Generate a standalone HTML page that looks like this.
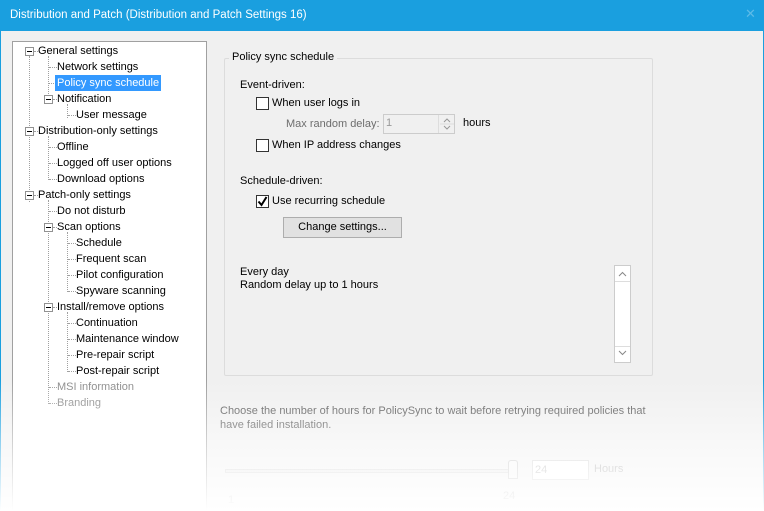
<!DOCTYPE html>
<html><head><style>
*{margin:0;padding:0;box-sizing:border-box}
body{width:764px;height:511px;overflow:hidden;background:#f0f0f0;font-family:"Liberation Sans",sans-serif;font-size:11px;color:#000;position:relative}
.a{position:absolute;white-space:nowrap}
#title{left:0;top:0;width:764px;height:31px;background:#1a9fdf;color:#fff;font-size:11.5px;padding:9px 0 0 10px}
#lb{left:0;top:31px;width:1px;height:480px;background:#1a9fdf}
#rb{left:763px;top:31px;width:1px;height:480px;background:#1a9fdf}
#tree{left:12px;top:41px;width:195px;height:470px;background:#fff;border:1px solid #a0a0a0}
.t{position:absolute;height:16px;line-height:16px}
.box{position:absolute;width:9px;height:9px;border:1px solid #919191;background:#fff}
.box:after{content:"";position:absolute;left:1px;top:3px;width:5px;height:1px;background:#000}
.dv{position:absolute;border-left:1px dotted #a0a0a0;width:0}
.dh{position:absolute;border-top:1px dotted #a0a0a0;height:0}
.sel{background:#3399ff;color:#fff;padding:0 2px}
.grey{color:#8c8c8c}
#grp{left:224px;top:58px;width:429px;height:318px;border:1px solid #dcdcdc;border-radius:2px}
.cb{position:absolute;width:13px;height:13px;border:1px solid #333;background:#fff}
.btn{left:283px;top:217px;width:119px;height:21px;border:1px solid #adadad;background:#e1e1e1;text-align:center;line-height:19px}
#fade{left:0;top:380px;width:764px;height:131px;background:linear-gradient(rgba(255,255,255,0),rgba(255,255,255,0.6) 55%,rgba(255,255,255,1))}
svg{position:absolute}
</style></head><body>
<div id="title" class="a">Distribution and Patch (Distribution and Patch Settings 16)</div>
<div class="a" style="left:745px;top:6px;color:#5dbbe8;font-size:13px">✕</div>
<div id="lb" class="a"></div><div id="rb" class="a"></div>

<div id="tree" class="a">
<div class="dv" style="left:16px;top:14px;height:146px"></div>
<div class="dv" style="left:35px;top:14px;height:48px"></div>
<div class="dv" style="left:54px;top:62px;height:14px"></div>
<div class="dv" style="left:35px;top:94px;height:44px"></div>
<div class="dv" style="left:35px;top:158px;height:204px"></div>
<div class="dv" style="left:54px;top:190px;height:60px"></div>
<div class="dv" style="left:54px;top:270px;height:60px"></div>
<div class="box" style="left:12px;top:5px"></div>
<div class="box" style="left:31px;top:53px"></div>
<div class="box" style="left:12px;top:85px"></div>
<div class="box" style="left:12px;top:149px"></div>
<div class="box" style="left:31px;top:181px"></div>
<div class="box" style="left:31px;top:261px"></div>
<div class="dh" style="left:21px;top:9px;width:4px"></div>
<div class="dh" style="left:36px;top:25px;width:8px"></div>
<div class="dh" style="left:36px;top:41px;width:7px"></div>
<div class="dh" style="left:40px;top:57px;width:4px"></div>
<div class="dh" style="left:55px;top:73px;width:8px"></div>
<div class="dh" style="left:21px;top:89px;width:4px"></div>
<div class="dh" style="left:36px;top:105px;width:8px"></div>
<div class="dh" style="left:36px;top:121px;width:8px"></div>
<div class="dh" style="left:36px;top:137px;width:8px"></div>
<div class="dh" style="left:21px;top:153px;width:4px"></div>
<div class="dh" style="left:36px;top:169px;width:8px"></div>
<div class="dh" style="left:40px;top:185px;width:4px"></div>
<div class="dh" style="left:55px;top:201px;width:8px"></div>
<div class="dh" style="left:55px;top:217px;width:8px"></div>
<div class="dh" style="left:55px;top:233px;width:8px"></div>
<div class="dh" style="left:55px;top:249px;width:8px"></div>
<div class="dh" style="left:40px;top:265px;width:4px"></div>
<div class="dh" style="left:55px;top:281px;width:8px"></div>
<div class="dh" style="left:55px;top:297px;width:8px"></div>
<div class="dh" style="left:55px;top:313px;width:8px"></div>
<div class="dh" style="left:55px;top:329px;width:8px"></div>
<div class="dh" style="left:36px;top:345px;width:8px"></div>
<div class="dh" style="left:36px;top:361px;width:8px"></div>
<div class="t" style="left:25px;top:1px">General settings</div>
<div class="t" style="left:44px;top:17px">Network settings</div>
<div class="t sel" style="left:42px;top:33px">Policy sync schedule</div>
<div class="t" style="left:44px;top:49px">Notification</div>
<div class="t" style="left:63px;top:65px">User message</div>
<div class="t" style="left:25px;top:81px">Distribution-only settings</div>
<div class="t" style="left:44px;top:97px">Offline</div>
<div class="t" style="left:44px;top:113px">Logged off user options</div>
<div class="t" style="left:44px;top:129px">Download options</div>
<div class="t" style="left:25px;top:145px">Patch-only settings</div>
<div class="t" style="left:44px;top:161px">Do not disturb</div>
<div class="t" style="left:44px;top:177px">Scan options</div>
<div class="t" style="left:63px;top:193px">Schedule</div>
<div class="t" style="left:63px;top:209px">Frequent scan</div>
<div class="t" style="left:63px;top:225px">Pilot configuration</div>
<div class="t" style="left:63px;top:241px">Spyware scanning</div>
<div class="t" style="left:44px;top:257px">Install/remove options</div>
<div class="t" style="left:63px;top:273px">Continuation</div>
<div class="t" style="left:63px;top:289px">Maintenance window</div>
<div class="t" style="left:63px;top:305px">Pre-repair script</div>
<div class="t" style="left:63px;top:321px">Post-repair script</div>
<div class="t grey" style="left:44px;top:337px">MSI information</div>
<div class="t grey" style="left:44px;top:353px">Branding</div>
</div>

<div id="grp" class="a"></div>
<div class="a" style="left:229px;top:51px;background:#f0f0f0;padding:0 3px">Policy sync schedule</div>
<div class="a" style="left:240px;top:79px">Event-driven:</div>
<div class="cb" style="left:256px;top:97px"></div>
<div class="a" style="left:272px;top:97px">When user logs in</div>
<div class="a" style="left:286px;top:118px;color:#6d6d6d">Max random delay:</div>
<div class="a" style="left:383px;top:114px;width:72px;height:20px;border:1px solid #ccc;background:#f0f0f0;color:#999;padding:2px 0 0 2px">1</div>
<div class="a" style="left:438px;top:115px;width:16px;height:18px;border-left:1px solid #ddd"></div>
<svg style="left:439px;top:115px" width="16" height="18"><path d="M5 7l3-3 3 3M5 11l3 3 3-3" fill="none" stroke="#999"/><path d="M1 9h14" stroke="#ddd"/></svg>
<div class="a" style="left:463px;top:117px">hours</div>
<div class="cb" style="left:256px;top:139px"></div>
<div class="a" style="left:272px;top:139px">When IP address changes</div>
<div class="a" style="left:240px;top:175px">Schedule-driven:</div>
<div class="cb" style="left:256px;top:195px"></div>
<svg style="left:256px;top:195px" width="13" height="13"><path d="M2.5 6.5l3 3.5 5-8" fill="none" stroke="#000" stroke-width="2"/></svg>
<div class="a" style="left:272px;top:195px">Use recurring schedule</div>
<div class="a btn">Change settings...</div>
<div class="a" style="left:240px;top:266px;line-height:13px">Every day<br>Random delay up to 1 hours</div>
<div class="a" style="left:614px;top:265px;width:17px;height:98px;border:1px solid #ccc;background:#fff"></div>
<div class="a" style="left:615px;top:266px;width:15px;height:16px;border-bottom:1px solid #ddd"></div>
<div class="a" style="left:615px;top:346px;width:15px;height:16px;border-top:1px solid #ddd"></div>
<svg style="left:615px;top:266px" width="15" height="96"><path d="M4 10l3.5-3.5 3.5 3.5M4 85l3.5 3.5 3.5-3.5" fill="none" stroke="#888"/></svg>

<div class="a" style="left:220px;top:404px;color:#555;line-height:14px">Choose the number of hours for PolicySync to wait before retrying required policies that<br>have failed installation.</div>
<div class="a" style="left:225px;top:469px;width:290px;height:4px;border:1px solid #ccc;background:#e7e7e7"></div>
<div class="a" style="left:508px;top:460px;width:10px;height:19px;border:1px solid #bbb;background:#f5f5f5;border-radius:3px 3px 0 0"></div>
<div class="a" style="left:532px;top:460px;width:57px;height:20px;border:1px solid #ccc;background:#fff;color:#aaa;padding:3px 0 0 2px">24</div>
<div class="a" style="left:594px;top:463px;color:#999">Hours</div>
<div class="a" style="left:228px;top:494px;color:#999">1</div>
<div class="a" style="left:503px;top:490px;color:#999">24</div>
<div id="fade" class="a"></div>
</body></html>
